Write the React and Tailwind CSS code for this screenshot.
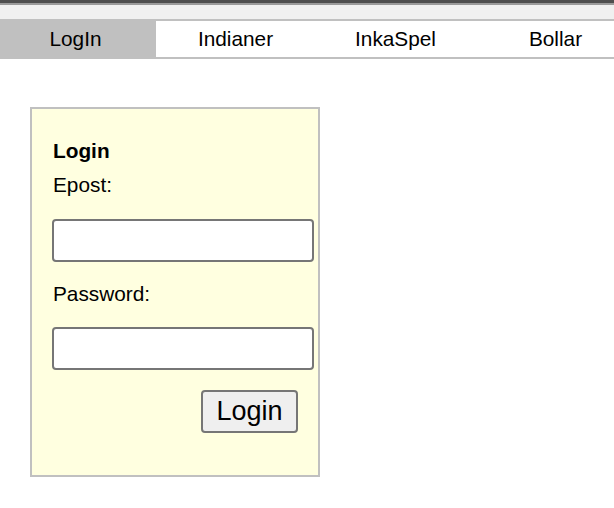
export default function App() {
  const tabs = ['LogIn', 'Indianer', 'InkaSpel', 'Bollar']

  return (
    <div className="min-h-screen bg-white text-black font-['Liberation_Sans',Arial,sans-serif]">
      {/* window strip */}
      <div className="h-[3px] bg-[#4e4e4e]" />
      <div className="h-[2px] bg-[#9a9a9a]" />
      <div className="h-[14px] bg-[#f0f0f0]" />

      <nav className="flex gap-[4px] h-[40px] border-y-2 border-[#c0c0c0] bg-white overflow-hidden">
        {tabs.map((t, i) => (
          <div
            key={t}
            className={
              i === 0
                ? 'w-[156px] shrink-0 -my-[2px] h-[40px] flex items-center justify-center pr-[5px] bg-[#c0c0c0] text-[20.8px]'
                : 'w-[156px] shrink-0 flex items-center justify-center pr-[5px] text-[20.8px]'
            }
          >
            {t}
          </div>
        ))}
      </nav>

      <div className="ml-[30px] mt-[48px] w-[290px] h-[370px] border-2 border-[#c0c0c0] bg-[#ffffe0] pl-[20px] pt-[30px] flex flex-col text-[20.8px] leading-[24px]">
        <h2 className="font-bold pl-[1px]">Login</h2>
        <label className="mt-[10px] pl-[1px]">Epost:</label>
        <input
          type="text"
          className="mt-[22px] w-[262px] h-[43px] border-2 border-[#767676] rounded-[4px] bg-white px-2 outline-none"
        />
        <label className="mt-[20px] pl-[1px]">Password:</label>
        <input
          type="password"
          className="mt-[21px] w-[262px] h-[43px] border-2 border-[#767676] rounded-[4px] bg-white px-2 outline-none"
        />
        <button className="mt-[20px] self-end mr-[20px] w-[97px] h-[43px] border-2 border-[#767676] rounded-[4px] bg-[#efefef] text-[27px] leading-none">
          Login
        </button>
      </div>
    </div>
  )
}
